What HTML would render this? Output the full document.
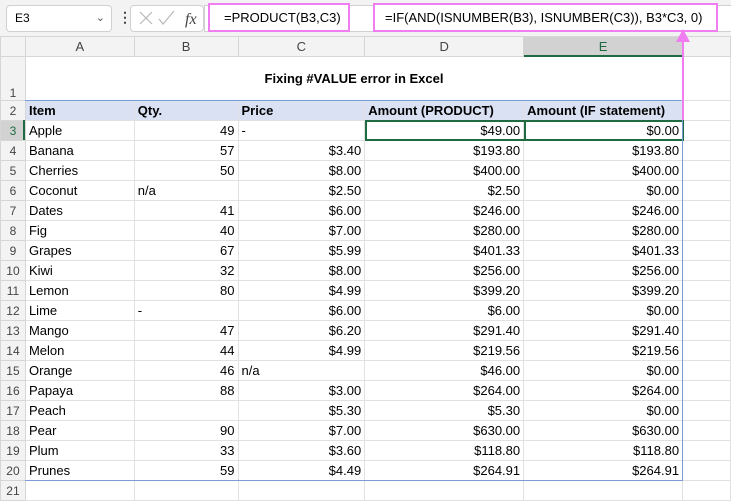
<!DOCTYPE html><html><head><style>
body{margin:0;width:731px;height:501px;background:#fff;font-family:"Liberation Sans",sans-serif;position:relative;overflow:hidden}
.a{position:absolute}
table{position:absolute;left:0;top:36px;border-collapse:collapse;table-layout:fixed;font-size:13px}
td{border:1px solid #e1e1e1;height:19px;padding:0 3px;white-space:nowrap;overflow:hidden;color:#000;box-sizing:border-box}
tr{height:20px}
td.h{background:#f3f3f3;color:#444;text-align:center;padding:0;font-size:12px;border-color:#d6d6d6}
tr.ch td{background:#f3f3f3;color:#444;text-align:center;font-size:13px;border-color:#d6d6d6}
.r{text-align:right}
tr.hd td{background:#dae1f3;font-weight:bold}
tr.hd td.h{background:#f3f3f3;font-weight:normal}
</style></head><body>
<div class="a" style="left:0;top:0;width:731px;height:36px;background:#f3f3f3"></div>
<div class="a" style="left:6px;top:5px;width:104px;height:25px;background:#fff;border:1px solid #d0d0d0;border-radius:4px;font-size:12px;line-height:25px;text-indent:8px">E3<span style="position:absolute;right:6px;font-size:11px;color:#555">&#8964;</span></div>
<div class="a" style="left:118px;top:9px;font-size:14px;color:#444;font-weight:bold;line-height:16px">&#8942;</div>
<div class="a" style="left:130px;top:5px;width:72px;height:25px;background:#fff;border:1px solid #d0d0d0;border-radius:4px"></div>
<svg class="a" style="left:130px;top:5px" width="74" height="26"><path d="M10 7 L22 19 M22 7 L10 19" stroke="#b8b8b8" stroke-width="1.2" fill="none"/><path d="M29 14 L33 19 L44 6" stroke="#b8b8b8" stroke-width="1.2" fill="none"/><text x="55" y="19" font-family="Liberation Serif" font-style="italic" font-size="16" fill="#444">fx</text></svg>
<div class="a" style="left:204px;top:5px;width:527px;height:25px;background:#fff;border:1px solid #d0d0d0;border-right:none"></div>
<div class="a" style="left:208px;top:3px;width:138px;height:25px;border:2px solid #f07ef0;background:#fff;font-size:13px;line-height:25px;text-indent:14px">=PRODUCT(B3,C3)</div>
<div class="a" style="left:373px;top:3px;width:341px;height:25px;border:2px solid #f07ef0;background:#fff;font-size:13px;line-height:25px;text-indent:10px">=IF(AND(ISNUMBER(B3), ISNUMBER(C3)), B3*C3, 0)</div>
<table>
<colgroup><col style="width:25px"><col style="width:109px"><col style="width:104px"><col style="width:127px"><col style="width:159px"><col style="width:159px"><col style="width:48px"></colgroup>
<tr class="ch"><td></td><td>A</td><td>B</td><td>C</td><td>D</td><td style="background:#d2d2d2;color:#1e6b41">E</td><td></td></tr>
<tr style="height:44px"><td class="h" style="vertical-align:bottom">1</td><td colspan="5" style="text-align:center;font-weight:bold;border-color:transparent #e1e1e1">Fixing #VALUE error in Excel</td><td></td></tr>
<tr class="hd"><td class="h">2</td><td>Item</td><td>Qty.</td><td>Price</td><td>Amount (PRODUCT)</td><td>Amount (IF statement)</td><td style="background:#fff"></td></tr>
<tr><td class="h" style="background:#d2d2d2;color:#1e6b41">3</td><td>Apple</td><td class="r">49</td><td>-</td><td class="r">$49.00</td><td class="r">$0.00</td><td></td></tr>
<tr><td class="h">4</td><td>Banana</td><td class="r">57</td><td class="r">$3.40</td><td class="r">$193.80</td><td class="r">$193.80</td><td></td></tr>
<tr><td class="h">5</td><td>Cherries</td><td class="r">50</td><td class="r">$8.00</td><td class="r">$400.00</td><td class="r">$400.00</td><td></td></tr>
<tr><td class="h">6</td><td>Coconut</td><td>n/a</td><td class="r">$2.50</td><td class="r">$2.50</td><td class="r">$0.00</td><td></td></tr>
<tr><td class="h">7</td><td>Dates</td><td class="r">41</td><td class="r">$6.00</td><td class="r">$246.00</td><td class="r">$246.00</td><td></td></tr>
<tr><td class="h">8</td><td>Fig</td><td class="r">40</td><td class="r">$7.00</td><td class="r">$280.00</td><td class="r">$280.00</td><td></td></tr>
<tr><td class="h">9</td><td>Grapes</td><td class="r">67</td><td class="r">$5.99</td><td class="r">$401.33</td><td class="r">$401.33</td><td></td></tr>
<tr><td class="h">10</td><td>Kiwi</td><td class="r">32</td><td class="r">$8.00</td><td class="r">$256.00</td><td class="r">$256.00</td><td></td></tr>
<tr><td class="h">11</td><td>Lemon</td><td class="r">80</td><td class="r">$4.99</td><td class="r">$399.20</td><td class="r">$399.20</td><td></td></tr>
<tr><td class="h">12</td><td>Lime</td><td>-</td><td class="r">$6.00</td><td class="r">$6.00</td><td class="r">$0.00</td><td></td></tr>
<tr><td class="h">13</td><td>Mango</td><td class="r">47</td><td class="r">$6.20</td><td class="r">$291.40</td><td class="r">$291.40</td><td></td></tr>
<tr><td class="h">14</td><td>Melon</td><td class="r">44</td><td class="r">$4.99</td><td class="r">$219.56</td><td class="r">$219.56</td><td></td></tr>
<tr><td class="h">15</td><td>Orange</td><td class="r">46</td><td>n/a</td><td class="r">$46.00</td><td class="r">$0.00</td><td></td></tr>
<tr><td class="h">16</td><td>Papaya</td><td class="r">88</td><td class="r">$3.00</td><td class="r">$264.00</td><td class="r">$264.00</td><td></td></tr>
<tr><td class="h">17</td><td>Peach</td><td></td><td class="r">$5.30</td><td class="r">$5.30</td><td class="r">$0.00</td><td></td></tr>
<tr><td class="h">18</td><td>Pear</td><td class="r">90</td><td class="r">$7.00</td><td class="r">$630.00</td><td class="r">$630.00</td><td></td></tr>
<tr><td class="h">19</td><td>Plum</td><td class="r">33</td><td class="r">$3.60</td><td class="r">$118.80</td><td class="r">$118.80</td><td></td></tr>
<tr><td class="h">20</td><td>Prunes</td><td class="r">59</td><td class="r">$4.49</td><td class="r">$264.91</td><td class="r">$264.91</td><td></td></tr>
<tr><td class="h">21</td><td></td><td></td><td></td><td></td><td></td><td></td></tr>
</table>
<div class="a" style="left:524px;top:55px;width:159px;height:2px;background:#1e6b41"></div>
<div class="a" style="left:23px;top:120px;width:2px;height:20px;background:#1e6b41"></div>
<div class="a" style="left:365px;top:120px;width:315px;height:17px;border:2px solid #1e6b41"></div>
<div class="a" style="left:524px;top:120px;width:2px;height:21px;background:#1e6b41"></div>
<div class="a" style="left:25px;top:100px;width:658px;height:1px;background:#7a9bd6"></div>
<div class="a" style="left:25px;top:480px;width:658px;height:1px;background:#7a9bd6"></div>
<div class="a" style="left:682px;top:100px;width:1px;height:380px;background:#7a9bd6"></div>
<div class="a" style="left:682px;top:34px;width:2px;height:86px;background:#f07ef0"></div>
<svg class="a" style="left:675px;top:29px" width="16" height="14"><path d="M8 0 L15 13 L1 13 Z" fill="#f07ef0"/></svg>
</body></html>
